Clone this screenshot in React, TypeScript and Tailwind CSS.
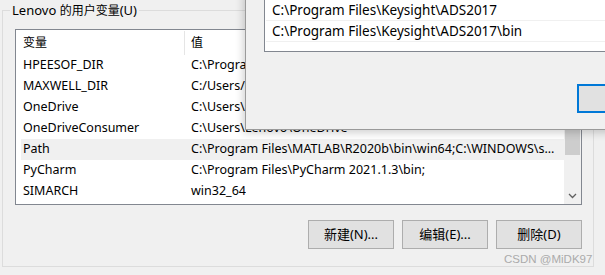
import React from "react";

const rows = [
  { name: "HPEESOF_DIR", value: "C:\\Program Files\\Keysight\\ADS2017" },
  { name: "MAXWELL_DIR", value: "C:/Users/Lenovo/AppData/Local/Maxwell" },
  { name: "OneDrive", value: "C:\\Users\\Lenovo\\OneDrive" },
  { name: "OneDriveConsumer", value: "C:\\Users\\Lenovo\\OneDrive" },
  {
    name: "Path",
    value: "C:\\Program Files\\MATLAB\\R2020b\\bin\\win64;C:\\WINDOWS\\s...",
    selected: true,
  },
  { name: "PyCharm", value: "C:\\Program Files\\PyCharm 2021.1.3\\bin;" },
  { name: "SIMARCH", value: "win32_64" },
];

const font = "font-['Segoe_UI','Noto_Sans','Noto_Sans_CJK_SC',sans-serif]";

export default function App() {
  return (
    <div
      className={`relative w-[605px] h-[275px] overflow-hidden bg-[#f0f0f0] text-[12.5px] text-black ${font}`}
    >
      {/* Group box */}
      <div className="relative ml-[2px] mt-[10px] w-[592px] h-[257px] border border-[#dcdcdc] pl-[12px] pt-[18px]">
        <span className="absolute left-[7px] top-[-9px] bg-[#f0f0f0] px-[2px] leading-[16px] text-[13px]">
          Lenovo <span className="text-[12px]">的用户变量</span>(U)
        </span>

        {/* List view */}
        <div className="flex w-[567px] h-[176px] border border-[#828790] bg-white">
          <div className="flex-1 flex flex-col">
            <div className="flex h-[25px] items-center text-[12px]">
              <div className="w-[168px] pl-[7px]">变量</div>
              <div className="h-[24px] w-px bg-[#e5e5e5]" />
              <div className="pl-[6px]">值</div>
            </div>
            {rows.map((r) => (
              <div
                key={r.name}
                className={`ml-[5px] flex h-[21px] items-center whitespace-nowrap ${
                  r.selected ? "bg-[#f0f0f0]" : ""
                }`}
              >
                <div className="w-[164px] pl-[2px]">{r.name}</div>
                <div className="pl-[6px] overflow-hidden">{r.value}</div>
              </div>
            ))}
          </div>
          {/* Scrollbar */}
          <div className="flex w-[17px] flex-col bg-[#f0f0f0]">
            <div className="mx-px h-[125px] bg-[#cdcdcd]" />
            <div className="flex-1" />
            <div className="flex h-[17px] items-center justify-center">
              <svg width="9" height="6" viewBox="0 0 9 6">
                <path d="M1 1l3.5 3.5L8 1" fill="none" stroke="#606060" strokeWidth="1.3" />
              </svg>
            </div>
          </div>
        </div>

        {/* Buttons */}
        <div className="mt-[15px] flex w-[567px] justify-end gap-[8px]">
          {["新建(N)...", "编辑(E)...", "删除(D)"].map((t) => (
            <button
              key={t}
              className="h-[29px] w-[86px] border border-[#adadad] bg-[#e1e1e1] text-[13px]"
            >
              {t}
            </button>
          ))}
        </div>
      </div>

      {/* Overlapping edit dialog */}
      <div className="absolute left-[245px] top-[-10px] h-[140px] w-[380px] border border-[#9a9a9a] bg-[#f0f0f0] shadow-[-2px_3px_8px_rgba(0,0,0,0.18)]">
        <div className="ml-[18px] h-[61px] border border-[#828790] bg-white pl-px text-[13.5px]">
          <div className="flex h-[29px] items-end">
            <div className="flex h-[21px] w-full items-center border-b border-[#f0f0f0] pl-[6px]">
              C:\Program Files\Keysight\ADS2017
            </div>
          </div>
          <div className="flex h-[21px] items-center border-b border-[#f0f0f0] pl-[6px]">
            C:\Program Files\Keysight\ADS2017\bin
          </div>
        </div>
        <div className="ml-[331px] mt-[32px] h-[29px] w-[60px] border-2 border-[#0078d7] bg-[#e1e1e1]" />
      </div>

      {/* Watermark */}
      <div className="absolute left-[504px] top-[251px] font-['Liberation_Sans',sans-serif] text-[11.5px] text-[#ababab]">
        CSDN @MiDK97
      </div>
    </div>
  );
}
